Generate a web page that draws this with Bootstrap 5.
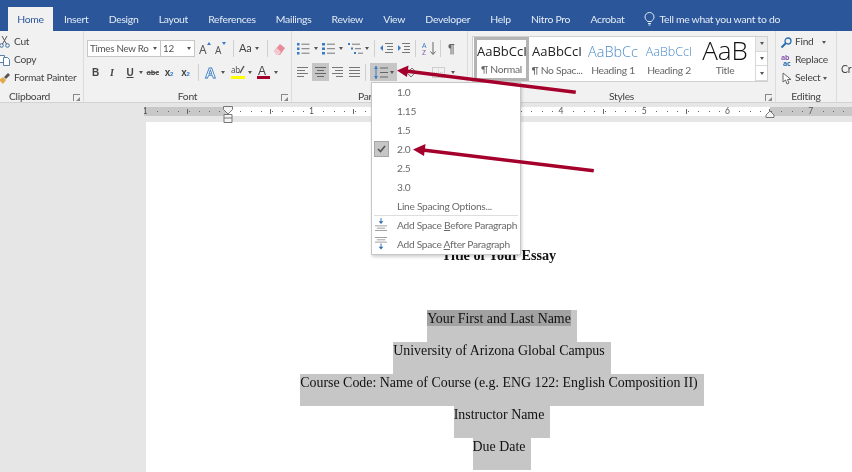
<!DOCTYPE html>
<html lang="en"><head><meta charset="utf-8"><title>Word line spacing</title>
<link href="https://cdn.jsdelivr.net/npm/bootstrap@5.3.0/dist/css/bootstrap.min.css" rel="stylesheet">
<style>
html,body{height:472px;overflow:hidden;margin:0}
body{font-family:Lato,"Noto Sans",sans-serif;font-size:10.2px;letter-spacing:-.28px;color:#444;background:#e6e6e6}
svg{overflow:visible}
.app{position:relative;width:852px;height:472px;overflow:hidden;filter:blur(.3px)}
.tabbar{height:31px;background:#2b579a;padding:7px 0 0 8px;flex-wrap:nowrap}
.tabbar .nav-link{color:#e4ebf5;font-size:10.4px;padding:0;height:24px;line-height:24px;white-space:nowrap}
.tabbar .nav-link.active{background:#f1f1f1;color:#2b579a;width:45px;text-align:center}
.t1{margin-left:11px}.t2{margin-left:20.2px}.t3{margin-left:20px}
.ribbon{height:72px;background:#f1f1f1;border-bottom:1px solid #d2d2d2;overflow:hidden}
.grp{position:relative;flex:none;height:71px;border-right:1px solid #dcdcdc}
.gclip{width:84px}.gfont{width:208px;padding:9px 0 0 3px}.gpara{width:176px;padding:9px 0 0 5px}
.gstyle{width:308px;padding:5px 0 0 4px}.gedit{width:61px;padding:2px 0 0 5px}
.grow{display:flex;align-items:center;height:17px;white-space:nowrap}
.grow2{margin-top:6px;height:18px}
.cliprow{display:flex;align-items:center;height:18px;white-space:nowrap;margin-left:-1px}
.cliprow svg{flex:none}
.cliptext{margin-left:4px}
.clipwrap{padding-top:2px}
.glabel{position:absolute;left:0;right:0;top:59px;height:12px;line-height:12px;text-align:center;color:#444;font-size:10.3px}
.gclip .glabel{left:-12px;right:12px}
.launch{position:absolute;right:3px;bottom:1px;width:7px;height:7px;border-left:1px solid #888;border-top:1px solid #888}
.launch::after{content:"";position:absolute;right:0;bottom:0;width:4px;height:4px;background:#888;clip-path:polygon(100% 0,100% 100%,0 100%)}
.fname{width:74px;height:17px;background:#fff;border:1px solid #c6c6c6;display:flex;align-items:center;padding-left:2px;color:#555;font-size:9.8px;overflow:hidden;justify-content:space-between;padding-right:3px}
.fsize{width:34px;border-left:0}
.car{display:inline-block;flex:none;width:0;height:0;border-left:2.5px solid transparent;border-right:2.5px solid transparent;border-top:3px solid #555}
.vsep{flex:none;width:1px;height:17px;background:#d0d0d0}
.alignon{display:flex;align-items:center;justify-content:center;width:17px;height:18px;background:#c6c6c6}
.lsbtn{display:flex;align-items:center;width:27px;height:18px;background:#c6c6c6;padding-left:3px}
.m1{margin-left:1px}.m2{margin-left:2px}.m3{margin-left:3px}.m4{margin-left:4px}.m5{margin-left:5px}.m6{margin-left:6px}.m7{margin-left:7px}.m8{margin-left:8px}.m9{margin-left:9px}.m11{margin-left:11px}.m12{margin-left:12px}.m13{margin-left:13px}
.boldb{font:700 10px "Liberation Sans",sans-serif;color:#444}
.ital{font:italic 700 10px "Liberation Serif",serif;color:#444}
.ul{font:700 10px "Liberation Sans",sans-serif;color:#444;text-decoration:underline}
.abc{font:700 7.5px "Noto Sans",sans-serif;color:#555;text-decoration:line-through}
.xs{font:700 10px "Liberation Sans",sans-serif;color:#444}
.xs sub,.xs sup{font-size:6px;color:#2b7cd3;position:static}
.pil{font:700 12px "Liberation Sans",sans-serif;color:#666}
.aa{font-size:11px}
.gallery{display:flex;width:296px;height:46px;background:#fff;border:1px solid #d0d0d0;overflow:hidden}
.scell{flex:none;width:56px;height:44px;text-align:center;overflow:hidden;white-space:nowrap}
.scell-n{width:55px;margin:0 0 0 1px;border:3px solid #b4b4b4}
.samp{height:23px;line-height:23px;font-family:"Open Sans",sans-serif;font-size:13px;letter-spacing:0;color:#222;overflow:hidden;margin-top:3px}
.scell-n .samp{margin-top:0}
.cap{font-size:10.3px;color:#666;line-height:14px}
.scell-n .cap{line-height:13px}
.samp-h1{color:#4a8bc9;font-size:14.5px;font-weight:300}.samp-h2{color:#4a8bc9;font-size:12.5px;font-weight:300}
.samp-t{font-size:26px;line-height:20px;color:#111;font-weight:300}
.scrollc{flex:none;width:13px;margin-left:2px;border-left:1px solid #d8d8d8;display:flex;flex-direction:column}
.sbtn{flex:1;display:flex;align-items:center;justify-content:center;border-bottom:1px solid #d8d8d8;background:#fff}
.sbtn-off{background:#ededed}
.edrow{display:flex;align-items:center;height:18px;white-space:nowrap}
.edtxt{margin-left:3px}
.crop{position:absolute;left:841px;top:62px;font-size:10.5px;color:#444}
.rulerzone{height:19px;background:#e6e6e6;padding-top:4px}
.ruler{position:relative;height:9px;margin-left:144px;background:#fff;overflow:hidden;display:flex;font-size:8.5px;letter-spacing:0;color:#555;line-height:9px}
.ruler-l,.ruler-r{position:absolute;top:0;bottom:0;background:#c8c8c8}
.ruler-l{left:0;width:84px}.ruler-r{left:626px;right:0}
.ticks{position:absolute;left:0;right:0;top:0;bottom:0;background:repeating-linear-gradient(90deg,#666 0 1px,transparent 1px 20.8px) 3px 50%/100% 1px no-repeat,repeating-linear-gradient(90deg,#666 0 1px,transparent 1px 83.2px) 43px 50%/100% 5px no-repeat,repeating-linear-gradient(90deg,#666 0 1px,transparent 1px 20.8px) 13.4px 50%/100% 1px no-repeat}
.nums{position:relative;display:flex;margin-left:-40.5px}
.nums span{flex:none;width:83.2px;text-align:center}
.nums span b{font-weight:400;background:#fff;padding:0 1px}
.nums span.ongray b{background:#c8c8c8}
.docwrap{height:350px;padding-left:146px;background:#e6e6e6}
.paper{height:350px;background:#fff;padding:125px 0 0 6px;font-family:"Liberation Serif",serif;font-size:13.9px;letter-spacing:0;color:#111;line-height:18px;text-align:center}
.dtitle{font-weight:700;font-size:14.2px;line-height:16px;height:32px;padding-right:6px;margin-bottom:31px}
.dline{display:flex;justify-content:center;height:32px}
.sel{display:block;height:32px;background:#c6c6c6;padding-right:6px;white-space:nowrap}
.sel i{display:block;font-style:normal;background:#a2a2a2;height:16px}
.lsmenu{position:absolute;left:371px;top:82px;width:150px;height:173px;min-width:0;margin:0;padding:0;border:1px solid #c6c6c6;border-radius:0;background:#fff;box-shadow:1px 2px 3px rgba(0,0,0,.18);z-index:5;display:block}
.lsmenu .dropdown-item{position:relative;height:19px;line-height:19px;padding:0 0 0 25px;color:#6a6a6a;font-size:10.2px;letter-spacing:-.28px}
.lsmenu .dropdown-divider{margin:-1px 2px 0;border-color:#dedede}
.chk{position:absolute;left:2px;top:1px;width:15px;height:16px;background:#c6c6c6;border:1px solid #a5a5a5;display:flex;align-items:center;justify-content:center}
.micon{position:absolute;left:3px;top:2px}
.over{position:absolute;left:0;top:0;z-index:6;pointer-events:none}
</style></head>
<body>
<svg width="0" height="0" class="d-none">
<symbol id="bl" viewBox="0 0 13 13"><g fill="#3a7cc4"><rect x="0" y="1" width="2.5" height="2.5"/><rect x="0" y="5.5" width="2.5" height="2.5"/><rect x="0" y="10" width="2.5" height="2.5"/></g><path d="M4.5 2.2h8M4.5 6.7h8M4.5 11.2h8" stroke="#777"/></symbol>
<symbol id="ind" viewBox="0 0 13 11"><path d="M5 .5h8M7 3.5h6M7 6.5h6M5 9.5h8" stroke="#777"/></symbol>
<symbol id="al" viewBox="0 0 11 10"><path d="M0 .5h11M0 3.5h8M0 6.5h11M0 9.5h7" stroke="#777"/></symbol>
<symbol id="ac" viewBox="0 0 11 10"><path d="M0 .5h11M2 3.5h7M0 6.5h11M2 9.5h7" stroke="#666"/></symbol>
<symbol id="ar" viewBox="0 0 11 10"><path d="M0 .5h11M3 3.5h8M0 6.5h11M4 9.5h7" stroke="#777"/></symbol>
<symbol id="aj" viewBox="0 0 11 10"><path d="M0 .5h11M0 3.5h11M0 6.5h11M0 9.5h11" stroke="#777"/></symbol>
</svg>
<div class="app">
<ul class="nav tabbar">
<li class="nav-item"><a class="nav-link active" href="#">Home</a></li>
<li class="nav-item t1"><a class="nav-link" href="#">Insert</a></li>
<li class="nav-item t2"><a class="nav-link" href="#">Design</a></li>
<li class="nav-item t2"><a class="nav-link" href="#">Layout</a></li>
<li class="nav-item t2"><a class="nav-link" href="#">References</a></li>
<li class="nav-item t2"><a class="nav-link" href="#">Mailings</a></li>
<li class="nav-item t2"><a class="nav-link" href="#">Review</a></li>
<li class="nav-item t2"><a class="nav-link" href="#">View</a></li>
<li class="nav-item t2"><a class="nav-link" href="#">Developer</a></li>
<li class="nav-item t2"><a class="nav-link" href="#">Help</a></li>
<li class="nav-item t2"><a class="nav-link" href="#">Nitro Pro</a></li>
<li class="nav-item t2"><a class="nav-link" href="#">Acrobat</a></li>
<li class="nav-item t3 d-flex align-items-center"><svg width="11" height="14" viewBox="0 0 11 14" fill="none" stroke="#e4ebf5"><path d="M3.5 9.5C2.5 8 1 7 1 5a4.5 4.5 0 0 1 9 0c0 2-1.500 3-2.500 4.500z"/><path d="M4 11.500h3M4.500 13h2"/></svg><a class="nav-link m4" href="#">Tell me what you want to do</a></li>
</ul>
<div class="ribbon d-flex">
<div class="grp gclip"><div class="clipwrap">
<div class="cliprow"><svg width="11" height="12" viewBox="0 0 11 12" fill="none" stroke="#555"><circle cx="2.500" cy="9.500" r="1.800" stroke="#3a6ea5"/><circle cx="8.500" cy="9.500" r="1.800" stroke="#3a6ea5"/><path d="M3.500 8L8 0M7.500 8L3 0"/></svg><span class="cliptext">Cut</span></div>
<div class="cliprow"><svg width="11" height="12" viewBox="0 0 11 12" fill="#fff" stroke="#5a7fa8"><path d="M.5 1.500h5v7h-5z"/><path d="M4.500 3.500h4l2 2v6h-6z"/></svg><span class="cliptext">Copy</span></div>
<div class="cliprow"><svg width="11" height="11" viewBox="0 0 11 11"><path d="M0 7l4-3 3 3-3 4z" fill="#e3a84a"/><path d="M5 4l4-4 2 2-4 4z" fill="#555"/></svg><span class="cliptext">Format Painter</span></div>
</div><div class="glabel">Clipboard</div><span class="launch"></span></div>

<div class="grp gfont">
<div class="grow"><div class="fname"><span>Times New Ro</span><span class="car"></span></div><div class="fname fsize"><span>12</span><span class="car"></span></div>
<svg class="m4" width="13" height="13" viewBox="0 0 13 13"><text x="0" y="12" font-family="Noto Sans" font-size="12" fill="#555">A</text><path d="M8 3l2-3 2 3z" fill="#3a7cc4"/></svg>
<svg class="m3" width="11" height="13" viewBox="0 0 11 13"><text x="0" y="12" font-family="Noto Sans" font-size="10" fill="#555">A</text><path d="M7 0l2 3 2-3z" fill="#3a7cc4"/></svg>
<span class="vsep m7"></span><span class="m5 aa">Aa</span><span class="car m4"></span><span class="vsep m8"></span>
<svg class="m6" width="12" height="12" viewBox="0 0 12 12"><path d="M0 8l6-7 5 4-5 7H3z" fill="#e98a9a"/><path d="M0 8l3-3 4 4-2 3H3z" fill="#f3c9cf"/></svg></div>
<div class="grow grow2"><span class="boldb m5">B</span><span class="ital m11">I</span><span class="ul m13">U</span><span class="car m5"></span><span class="abc m4">abc</span><span class="xs m6">x<sub>2</sub></span><span class="xs m8">x<sup>2</sup></span><span class="vsep m8"></span>
<svg class="m6" width="13" height="13" viewBox="0 0 13 13"><text x="0" y="12" font-family="Liberation Sans" font-weight="700" font-size="15" fill="#fff" stroke="#3a7cc4" stroke-width=".8">A</text></svg><span class="car m3"></span>
<svg class="m6" width="14" height="15" viewBox="0 0 14 15"><text x="0" y="8" font-family="Noto Sans" font-size="8" fill="#555">ab</text><path d="M9 8l4-7" stroke="#555" stroke-width="1.500"/><rect y="11" width="14" height="3" fill="#ffff00"/></svg><span class="car m3"></span>
<svg class="m5" width="13" height="15" viewBox="0 0 13 15"><text x="1" y="10" font-family="Liberation Sans" font-size="12" fill="#444">A</text><rect y="11" width="13" height="3" fill="#a5002b"/></svg><span class="car m4"></span></div>
<div class="glabel">Font</div><span class="launch"></span></div>

<div class="grp gpara">
<div class="grow"><svg width="13" height="13"><use href="#bl"/></svg><span class="car m4"></span>
<svg class="m4" width="13" height="13" viewBox="0 0 13 13"><g fill="#3a7cc4"><rect y="1" width="3" height="2.500"/><rect y="5.500" width="3" height="2.500"/><rect y="10" width="3" height="2.500"/></g><path d="M5 2.200h8M5 6.700h8M5 11.200h8" stroke="#777"/></svg><span class="car m4"></span>
<svg class="m5" width="16" height="13" viewBox="0 0 16 13"><g fill="#3a7cc4"><rect y="1" width="2" height="2"/><rect x="3" y="5.500" width="2" height="2"/><rect x="6" y="10" width="2" height="2"/></g><path d="M4 2.200h8M7 6.700h6M10 11.200h5" stroke="#777"/></svg><span class="car m1"></span>
<span class="vsep m5"></span>
<svg class="m5" width="13" height="11" viewBox="0 0 13 11"><use href="#ind"/><path d="M0 5l3-3v6z" fill="#3a7cc4"/></svg>
<svg class="m4" width="13" height="11" viewBox="0 0 13 11"><use href="#ind"/><path d="M4 5L1 2v6z" fill="#3a7cc4"/></svg>
<span class="vsep m5"></span>
<svg class="m6" width="15" height="15" viewBox="0 0 15 15"><text x="0" y="7" font-family="Noto Sans" font-size="7" fill="#3a7cc4">A</text><text x="0" y="14" font-family="Noto Sans" font-size="7" fill="#8a5ab0">Z</text><path d="M11 1v12M8.500 10.500L11 13.500l2.500-3" stroke="#666" fill="none"/></svg>
<span class="vsep m3"></span><span class="m7 pil">¶</span></div>
<div class="grow grow2"><svg width="11" height="10"><use href="#al"/></svg><span class="alignon m4"><svg width="11" height="10"><use href="#ac"/></svg></span><svg class="m3" width="11" height="10"><use href="#ar"/></svg><svg class="m6" width="11" height="10"><use href="#aj"/></svg><span class="vsep m5"></span>
<span class="lsbtn m4"><svg width="15" height="15" viewBox="0 0 15 15"><path d="M3 1v13" stroke="#3a7cc4"/><path d="M1 4l2-3 2 3zM1 11l2 3 2-3z" fill="#3a7cc4"/><path d="M7 3h8M7 7.500h8M7 12h8" stroke="#666"/></svg><span class="car m2"></span></span>
<svg class="m8" width="15" height="13" viewBox="0 0 15 13"><path d="M2 7l5-5 4 4-5 5z" fill="#e6e6e6" stroke="#777"/></svg>
<svg class="m12" width="13" height="11" viewBox="0 0 13 11" fill="none"><rect x=".5" y=".5" width="12" height="10" stroke="#aaa" stroke-dasharray="1 1"/><path d="M0 5.500h13M6.500 0v11" stroke="#ccc" stroke-dasharray="1 1"/></svg><span class="car m6"></span></div>
<div class="glabel">Paragraph</div><span class="launch"></span></div>

<div class="grp gstyle"><div class="gallery">
<div class="scell scell-n"><div class="samp">AaBbCcI</div><div class="cap">¶ Normal</div></div>
<div class="scell"><div class="samp">AaBbCcI</div><div class="cap">¶ No Spac...</div></div>
<div class="scell"><div class="samp samp-h1">AaBbCc</div><div class="cap">Heading 1</div></div>
<div class="scell"><div class="samp samp-h2">AaBbCcI</div><div class="cap">Heading 2</div></div>
<div class="scell"><div class="samp samp-t">AaB</div><div class="cap">Title</div></div>
<div class="scrollc"><span class="sbtn sbtn-off"><span class="car"></span></span><span class="sbtn"><span class="car"></span></span><span class="sbtn"><span class="car"></span></span></div>
</div><div class="glabel">Styles</div><span class="launch"></span></div>

<div class="grp gedit">
<div class="edrow"><svg width="11" height="11" viewBox="0 0 11 11" fill="none" stroke="#2b6cb0" stroke-width="1.300"><circle cx="7" cy="4" r="3"/><path d="M5 6L.5 10.500" stroke-width="2"/></svg><span class="edtxt">Find</span><span class="car m9"></span></div>
<div class="edrow"><svg width="11" height="12" viewBox="0 0 11 12"><text x="0" y="6" font-family="Noto Sans" font-size="7" font-weight="700" fill="#8a5ab0">ab</text><text x="2" y="12" font-family="Noto Sans" font-size="7" font-weight="700" fill="#2b6cb0">ac</text></svg><span class="edtxt">Replace</span></div>
<div class="edrow"><svg width="11" height="13" viewBox="0 0 11 13" fill="#fff" stroke="#666"><path d="M2 1v9l2.500-2 1.500 4 2-1-1.500-3.500H10z"/></svg><span class="edtxt">Select</span><span class="car m2"></span></div>
<div class="glabel">Editing</div></div>
<div class="crop">Cr</div>
</div>
<div class="rulerzone"><div class="ruler"><span class="ruler-l"></span><span class="ruler-r"></span><span class="ticks"></span>
<div class="nums"><span class="ongray"><b>1</b></span><span></span><span><b>1</b></span><span><b>2</b></span><span><b>3</b></span><span><b>4</b></span><span><b>5</b></span><span><b>6</b></span><span class="ongray"><b>7</b></span></div></div></div>
<div class="docwrap"><div class="paper">
<div class="dtitle">Title of Your Essay</div>
<div class="dline"><span class="sel"><i>Your First and Last Name</i></span></div>
<div class="dline"><span class="sel">University of Arizona Global Campus</span></div>
<div class="dline"><span class="sel">Course Code: Name of Course (e.g. ENG 122: English Composition II)</span></div>
<div class="dline"><span class="sel">Instructor Name</span></div>
<div class="dline"><span class="sel">Due Date</span></div>
</div></div>

<ul class="dropdown-menu show lsmenu">
<li><a class="dropdown-item" href="#">1.0</a></li>
<li><a class="dropdown-item" href="#">1.15</a></li>
<li><a class="dropdown-item" href="#">1.5</a></li>
<li><a class="dropdown-item" href="#"><span class="chk"><svg width="9" height="8" viewBox="0 0 9 8" fill="none" stroke="#555" stroke-width="1.600"><path d="M1 4l2.500 2.500L8 1"/></svg></span>2.0</a></li>
<li><a class="dropdown-item" href="#">2.5</a></li>
<li><a class="dropdown-item" href="#">3.0</a></li>
<li><a class="dropdown-item" href="#">Line Spacing Options...</a></li>
<li><hr class="dropdown-divider"></li>
<li><a class="dropdown-item" href="#"><svg class="micon" width="12" height="13" viewBox="0 0 13 14"><path d="M6.500 0v5" stroke="#2b6cb0"/><path d="M4 3.500l2.500 3 2.500-3z" fill="#2b6cb0"/><path d="M0 8.500h13M2 11h9M0 13.500h13" stroke="#999"/></svg>Add Space <u>B</u>efore Paragraph</a></li>
<li><a class="dropdown-item" href="#"><svg class="micon" width="12" height="13" viewBox="0 0 13 14"><path d="M0 .5h13M2 3h9M0 5.500h13" stroke="#999"/><path d="M6.500 7v5" stroke="#2b6cb0"/><path d="M4 10.500l2.500 3 2.500-3z" fill="#2b6cb0"/></svg>Add Space <u>A</u>fter Paragraph</a></li>
</ul>
<svg class="over" width="852" height="472" viewBox="0 0 852 472">
<path d="M228 106.500h-4.500v3l4.500 4.500 4.500-4.500v-3zM224 114.500h8v8h-8z" fill="#f4f4f4" stroke="#777"/><path d="M224 118h8" stroke="#777"/>
<path d="M770 111l-4 4v2.500h8V115z" fill="#f4f4f4" stroke="#777"/>
<g fill="#a5002b"><path d="M576 90.500L408 69.500l.5-4L397 70.500l10 6.500.4-4L575.500 94z"/><path d="M594 169L425 148.500l.5-4.500L413 149.500l11 6.500.5-4L593.500 172.500z"/></g>
</svg>
</div>
<script src="https://cdn.jsdelivr.net/npm/bootstrap@5.3.0/dist/js/bootstrap.bundle.min.js"></script>
</body></html>
